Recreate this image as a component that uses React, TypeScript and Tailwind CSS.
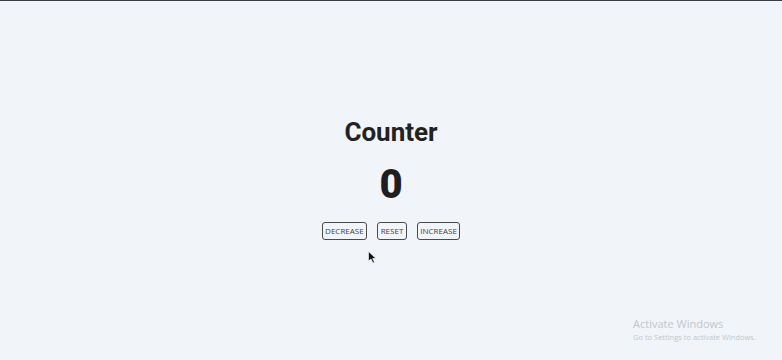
export default function App() {
  return (
    <div className="relative h-[360px] w-full overflow-hidden bg-[#f1f4f8] border-t border-[#3b3a45]">
      <div className="flex flex-col items-center pt-[113px]">
        <h1
          className="text-[26px] leading-[36px] font-bold text-[#222]"
          style={{ fontFamily: "Roboto, sans-serif" }}
        >
          Counter
        </h1>
        <p
          className="mt-[12px] text-[40px] leading-[46px] font-black text-[#1f1f1f]"
          style={{ fontFamily: "Roboto, sans-serif" }}
        >
          0
        </p>
        <div className="mt-[14px] flex gap-[10px]" style={{ fontFamily: "'Open Sans', sans-serif" }}>
          <button className="h-[18px] px-[2.5px] border border-[#4a4a4a] rounded-[3px] text-[8px] text-[#444]">
            DECREASE
          </button>
          <button className="h-[18px] px-[2.5px] border border-[#4a4a4a] rounded-[3px] text-[8px] text-[#444]">
            RESET
          </button>
          <button className="h-[18px] px-[2.5px] border border-[#4a4a4a] rounded-[3px] text-[8px] text-[#444]">
            INCREASE
          </button>
        </div>
      </div>

      {/* mouse pointer */}
      <svg className="absolute left-[368px] top-[250px]" width="9" height="13" viewBox="0 0 9 13">
        <path d="M0.5 0.5 L0.5 10 L3 8 L5 12 L6.5 11.3 L4.6 7.5 L8 7.5 Z" fill="#111" stroke="#fff" strokeWidth="0.6" />
      </svg>

      {/* windows watermark */}
      <div className="absolute left-[633px] top-[316px] text-[#c3c7cc]" style={{ fontFamily: "'Open Sans', sans-serif" }}>
        <p className="text-[11px] leading-[14px]">Activate Windows</p>
        <p className="text-[7.5px] leading-[12px]">Go to Settings to activate Windows.</p>
      </div>
    </div>
  );
}
